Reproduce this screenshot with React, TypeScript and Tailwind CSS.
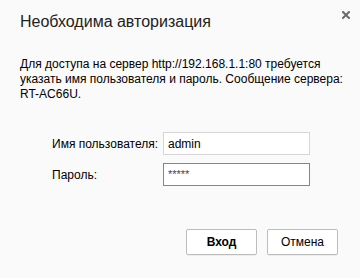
import React from "react";

export default function App() {
  return (
    <div
      className="relative w-[360px] h-[278px] bg-[#fafafa] text-black flex flex-col"
      style={{ fontFamily: '"Liberation Sans", Arial, sans-serif' }}
    >
      <button className="absolute top-[11px] right-[10px] w-[8px] h-[8px] flex items-center justify-center">
        <svg width="8" height="8" viewBox="0 0 8 8">
          <path d="M1 1 L7 7 M7 1 L1 7" stroke="#6b6b6b" strokeWidth="2" strokeLinecap="square" />
        </svg>
      </button>
      <div className="pl-[20px] pt-[12px] text-[16px] leading-[20px] text-[#222]">
        Необходима авторизация
      </div>
      <div className="pl-[20px] mt-[25px] text-[12px] leading-[15px] whitespace-nowrap">
        Для доступа на сервер http://192.168.1.1:80 требуется
        <br />
        указать имя пользователя и пароль. Сообщение сервера:
        <br />
        RT-AC66U.
      </div>
      <div className="mt-[30px] flex flex-col gap-[8px] text-[12px]">
        <div className="flex items-center">
          <label className="pl-[52px] w-[163px] whitespace-nowrap">Имя пользователя:</label>
          <div className="w-[147px] h-[23px] border border-[#d6d6d6] bg-white flex items-center px-[4px] text-[12px]">
            admin
          </div>
        </div>
        <div className="flex items-center">
          <label className="pl-[52px] w-[163px] whitespace-nowrap">Пароль:</label>
          <div className="w-[147px] h-[23px] border border-[#4d8ef0] bg-white flex items-center px-[4px] text-[11px] text-[#444]">
            *****
          </div>
        </div>
      </div>
      <div className="mt-[43px] flex justify-end gap-[10px] pr-[22px]">
        <button className="w-[71px] h-[26px] border border-[#bdbdbd] bg-white rounded-[2px] shadow-[0_1px_0_rgba(0,0,0,0.05)] text-[12px] font-bold">
          Вход
        </button>
        <button className="w-[71px] h-[26px] border border-[#bdbdbd] bg-white rounded-[2px] shadow-[0_1px_0_rgba(0,0,0,0.05)] text-[12px]">
          Отмена
        </button>
      </div>
    </div>
  );
}
